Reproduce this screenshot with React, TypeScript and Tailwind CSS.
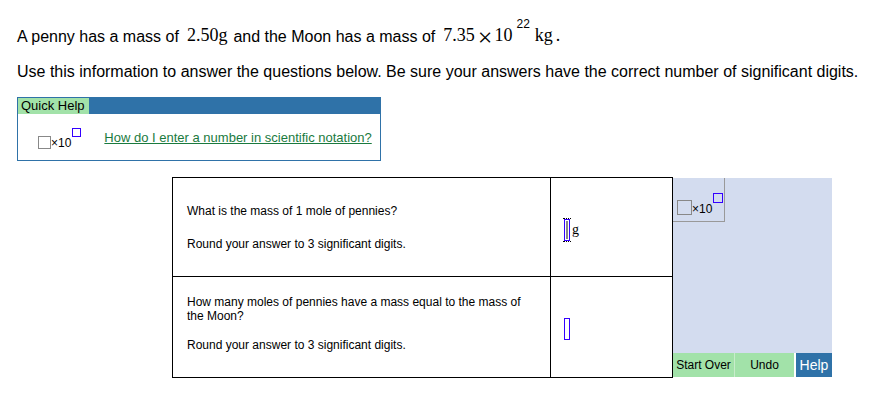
import React from 'react'

const sans = { fontFamily: '"Liberation Sans", Arial, sans-serif' }
const serif = { fontFamily: '"Liberation Serif", "Times New Roman", serif' }

function SciIcon({ big = false }: { big?: boolean }) {
  return (
    <div className="relative flex items-end" style={sans}>
      <span
        className={
          big
            ? 'inline-block h-[15px] w-[15px] border border-[#888]'
            : 'inline-block h-[13px] w-[13px] border border-[#888]'
        }
      />
      <span className="text-[12px] leading-[12px] text-black">×10</span>
      <span
        className={
          big
            ? 'ml-[1px] mb-[12px] inline-block h-[10px] w-[10px] border border-[#3300ff]'
            : 'ml-[1px] mb-[12px] inline-block h-[9px] w-[9px] border border-[#3300ff]'
        }
      />
    </div>
  )
}

function AnswerBox({ cursor = false }: { cursor?: boolean }) {
  return (
    <div className="relative h-[22px] w-[6px] border border-[#3300ff] bg-white">
      {cursor && (
        <>
          <span className="absolute -top-[2px] left-[-2px] h-[2px] w-[8px] border-t border-dotted border-black" />
          <span className="absolute -bottom-[2px] left-[-2px] h-[2px] w-[8px] border-b border-dotted border-black" />
          <span className="absolute left-[1px] top-[1px] h-[18px] w-[2px] border-x border-[#888]" />
        </>
      )}
    </div>
  )
}

export default function App() {
  return (
    <div className="h-[393px] w-[894px] bg-white pl-[17px] text-black" style={sans}>
      {/* Problem statement */}
      <div className="flex h-[53px] items-end pb-[4px] text-[16px]">
        <span>A penny has a mass of</span>
        <span className="ml-[8px] text-[18px]" style={serif}>
          2.50g
        </span>
        <span className="ml-[6px]">and the Moon has a mass of</span>
        <span className="ml-[8px] text-[18px]" style={serif}>
          7.35
        </span>
        <span className="ml-[3px] mr-[2px] text-[26px] font-light leading-[22px]" style={serif}>
          ×
        </span>
        <span className="text-[18px]" style={serif}>
          10
        </span>
        <span className="relative -top-[16px] ml-[4px] text-[12px]" style={sans}>
          22
        </span>
        <span className="ml-[5px] text-[18px]" style={serif}>
          kg
        </span>
        <span className="ml-[3px] text-[18px]" style={serif}>
          .
        </span>
      </div>
      <p className="mt-[9px] text-[16px] leading-[20px]">
        Use this information to answer the questions below. Be sure your answers have the correct number of significant
        digits.
      </p>

      {/* Quick help */}
      <div className="mt-[15px] w-[364px] border border-[#2f72a8]">
        <div className="flex h-[16px] bg-[#2f72a8]">
          <span className="flex h-[16px] w-[71px] items-center whitespace-nowrap bg-[#a2e2a9] pl-[3px] text-[13px] leading-[14px]">
            Quick Help
          </span>
        </div>
        <div className="flex h-[46px] items-center pb-[2px]">
          <div className="ml-[20px] mt-[4px]">
            <SciIcon />
          </div>
          <a className="ml-[23px] mt-[4px] text-[13px] text-[#1a7a3e] underline" href="#">
            How do I enter a number in scientific notation?
          </a>
        </div>
      </div>

      {/* Question table + keypad */}
      <div className="ml-[155px] mt-[16px] flex items-start">
        <div className="w-[501px] border border-black">
          <div className="flex h-[99px] border-b border-black">
            <div className="w-[378px] border-r border-black pl-[14px] pt-[26px] text-[12px] leading-[14px]">
              <p>What is the mass of 1 mole of pennies?</p>
              <p className="mt-[19px]">Round your answer to 3 significant digits.</p>
            </div>
            <div className="flex flex-1 items-center pl-[13px] pt-[5px]">
              <AnswerBox cursor />
              <span className="ml-[2px] text-[14px]" style={serif}>
                g
              </span>
            </div>
          </div>
          <div className="flex h-[100px]">
            <div className="w-[378px] border-r border-black pl-[14px] pt-[18px] text-[12px] leading-[14px]">
              <p>How many moles of pennies have a mass equal to the mass of</p>
              <p>the Moon?</p>
              <p className="mt-[15px]">Round your answer to 3 significant digits.</p>
            </div>
            <div className="flex flex-1 items-center pl-[13px] pt-[4px]">
              <AnswerBox />
            </div>
          </div>
        </div>

        <div className="mt-[1px] flex w-[159px] flex-col">
          <div className="h-[175px] bg-[#d3dcef]">
            <div className="flex h-[44px] w-[52px] items-center border-b border-r border-[#999] pl-[4px] pt-[8px]">
              <SciIcon big />
            </div>
          </div>
          <div className="flex h-[24px] text-[12px]">
            <button className="w-[62px] border-r border-[#c8eccb] bg-[#a2e2a9]">Start Over</button>
            <button className="w-[61px] border-r-2 border-white bg-[#a2e2a9]">Undo</button>
            <button className="flex-1 bg-[#2f72a8] text-[14px] text-white">Help</button>
          </div>
        </div>
      </div>
    </div>
  )
}
